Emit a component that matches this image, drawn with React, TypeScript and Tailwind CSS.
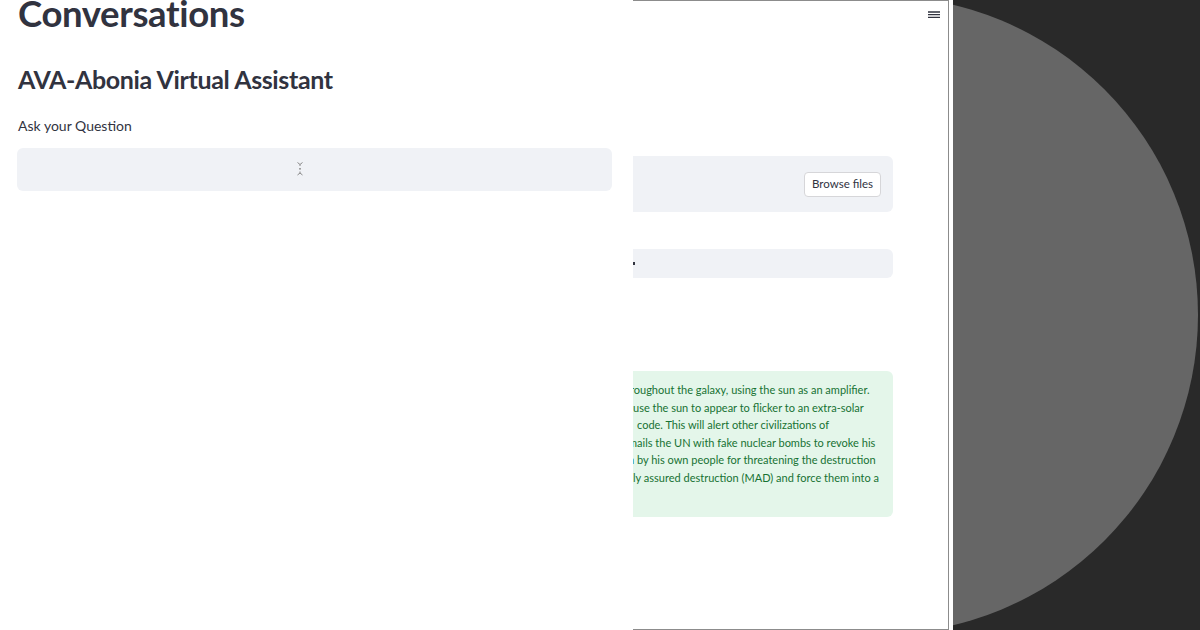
const font = { fontFamily: 'Lato, "Noto Sans", sans-serif' };

const answerLines = [
  { text: 'roughout the galaxy, using the sun as an amplifier.', cls: '-ml-[3px]' },
  { text: 'use the sun to appear to flicker to an extra-solar', cls: 'ml-0' },
  { text: 'code. This will alert other civilizations of', cls: 'ml-[4px]' },
  { text: 'mails the UN with fake nuclear bombs to revoke his', cls: '-ml-[5px]' },
  { text: 'n by his own people for threatening the destruction', cls: '-ml-[5px]' },
  { text: 'ly assured destruction (MAD) and force them into a', cls: 'ml-0' },
];

const IBeam = () => (
  <svg width="8" height="16" viewBox="0 0 8 16" className="text-[#8a8a8a]">
    <path d="M1.5 1.5 L4 3.5 L6.5 1.5 M4 3.5 V5" stroke="currentColor" strokeWidth="1" fill="none" />
    <rect x="3.2" y="7" width="1.6" height="1.6" fill="currentColor" />
    <path d="M4 10.5 V12 M1.5 14 L4 12 L6.5 14" stroke="currentColor" strokeWidth="1" fill="none" />
  </svg>
);

// streamlit main menu glyph
const Hamburger = () => (
  <svg width="12" height="8" viewBox="0 0 12 8" className="text-[#31333f]">
    <path d="M0 1 H12 M0 3.7 H12 M0 6.4 H12" stroke="currentColor" strokeWidth="1.3" />
  </svg>
);

export default function App() {
  return (
    <div className="flex w-[1200px] h-[630px] overflow-hidden bg-[#292929]" style={font}>
      {/* Front app window */}
      <div className="w-[633px] h-full bg-white flex flex-col px-[17px] text-[#31333f]">
        <h1 className="text-[36.5px] font-bold leading-none -mt-[5px] ml-[1px] tracking-[-0.01em]">
          Conversations
        </h1>
        <h2 className="text-[25px] font-bold leading-none mt-[35px] ml-[1px] tracking-[-0.015em]">
          AVA-Abonia Virtual Assistant
        </h2>
        <label className="text-[14px] leading-none mt-[27px] ml-[1px]">Ask your Question</label>
        <div className="mt-[15px] w-[595px] h-[43px] rounded-md bg-[#f0f2f6] flex items-center pl-[279px]">
          <IBeam />
        </div>
      </div>

      {/* Background app window */}
      <div className="w-[316px] h-full bg-white border-t border-r border-b border-[#8c8c8c] flex flex-col text-[#31333f]">
        <div className="flex justify-end pr-[8px] pt-[10px] h-[23px]">
          <Hamburger />
        </div>
        <div className="mt-[132px] w-[260px] h-[56px] bg-[#f0f2f6] rounded-r-md flex items-center justify-end pr-[12px]">
          <button className="h-[25px] w-[77px] bg-white border border-[#d6d6d9] rounded-[4px] text-[11.5px] text-[#31333f]">
            Browse files
          </button>
        </div>
        <div className="mt-[37px] w-[260px] h-[29px] bg-[#f0f2f6] rounded-r-md flex items-center">
          <span className="w-[2px] h-[3px] bg-[#31333f]" />
        </div>
        <div className="mt-[93px] w-[260px] h-[146px] bg-[#e4f6ea] rounded-r-md overflow-hidden pt-[10px] text-[11px] leading-[17.6px] text-[#177233]">
          {answerLines.map((l) => (
            <div key={l.text} className={`whitespace-nowrap ${l.cls}`}>
              {l.text}
            </div>
          ))}
        </div>
      </div>

      {/* Desktop background */}
      <div className="w-[4px] h-full bg-white" />
      <div className="relative flex-1 h-full overflow-hidden">
        <div className="absolute left-[-393px] top-[-4px] w-[638px] h-[638px] rounded-full bg-[#666666]" />
      </div>
    </div>
  );
}
